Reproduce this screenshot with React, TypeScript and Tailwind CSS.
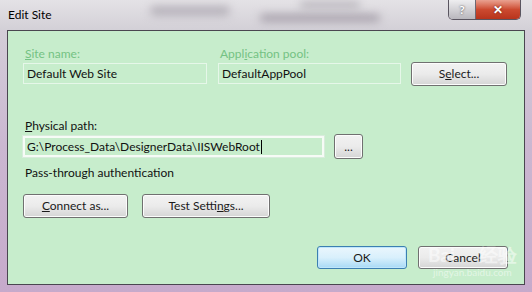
import React from "react";

const font = { fontFamily: 'Lato, "Noto Sans", "Liberation Sans", sans-serif' };

const Btn = ({
  children,
  className = "",
  primary = false,
}: {
  children: React.ReactNode;
  className?: string;
  primary?: boolean;
}) => (
  <button
    className={
      "flex items-center justify-center rounded-[3px] border text-[12px] text-[#1a1a1a] bg-gradient-to-b " +
      (primary
        ? "border-[#3c7fb1] from-[#eaf6fd] via-[#d9f0fc] to-[#a7d9f5] shadow-[inset_0_0_0_1px_#bfe6fb] "
        : "border-[#707070] from-[#f2f2f2] via-[#ebebeb] to-[#d5d5d5] shadow-[inset_0_0_0_1px_#fcfcfc] ") +
      className
    }
  >
    {children}
  </button>
);

const Field = ({ children, className = "" }: { children: React.ReactNode; className?: string }) => (
  <div
    className={
      "flex h-[21px] items-center border border-[#e6f7e9] px-[3px] text-[12px] text-[#111] " + className
    }
  >
    {children}
  </div>
);

export default function App() {
  return (
    <div
      style={font}
      className="relative h-[292px] w-[532px] overflow-hidden bg-gradient-to-b from-[#d6d3da] via-[#cbb7d1] to-[#c6aacb]"
    >
      {/* title bar */}
      <div className="relative h-[30px] bg-gradient-to-b from-[#e4e2e6] to-[#d3d0d7]">
        <div className="absolute left-[150px] top-[6px] h-[10px] w-[80px] rounded-full bg-[#b7b3bb] blur-[4px]" />
        <div className="absolute left-[260px] top-[14px] h-[8px] w-[120px] rounded-full bg-[#a9a3ad] blur-[4px]" />
        <div className="absolute left-[300px] top-[2px] h-[6px] w-[60px] rounded-full bg-[#b3afb6] blur-[4px]" />
        <span className="absolute left-[8px] top-[6px] text-[12px] text-black">Edit Site</span>
        <div className="absolute right-[11px] top-0 flex h-[20px] overflow-hidden rounded-b-[5px] border border-t-0 border-[#5a5560]">
          <div className="flex w-[27px] items-center justify-center border-r border-[#6d6872] bg-gradient-to-b from-[#eeeef0] to-[#b9b7bd] text-[12px] font-bold text-white [text-shadow:0_0_2px_#333]">
            ?
          </div>
          <div className="flex w-[44px] items-center justify-center bg-gradient-to-b from-[#e9a190] via-[#cc4a30] to-[#b8331c] text-[12px] font-bold text-white [text-shadow:0_0_2px_#5a1a10]">
            ✕
          </div>
        </div>
      </div>

      {/* content panel */}
      <div className="mx-[7px] h-[255px] border border-[#4a4650] bg-[#c7edcc] px-[15px]">
        <div className="mt-[14px] flex">
          <div className="w-[184px]">
            <div className="pl-[2px] text-[12px] leading-[17px] text-[#74c283]">
              <span className="underline">S</span>ite name:
            </div>
            <Field className="mt-[1px] w-[184px]">Default Web Site</Field>
          </div>
          <div className="ml-[11px] w-[183px]">
            <div className="pl-[2px] text-[12px] leading-[17px] text-[#74c283]">
              Appl<span className="underline">i</span>cation pool:
            </div>
            <Field className="mt-[1px] w-[183px]">DefaultAppPool</Field>
          </div>
          <Btn className="ml-[10px] mt-[17px] h-[24px] w-[96px]">
            <span>
              S<span className="underline">e</span>lect...
            </span>
          </Btn>
        </div>

        <div className="mt-[32px] pl-[2px] text-[12px] leading-[16px] text-[#111]">
          <span className="underline">P</span>hysical path:
        </div>
        <div className="flex h-[25px] items-center">
          <div className="flex h-[21px] w-[301px] items-center border-2 border-[#f6fbf6] px-[2px] text-[12px] text-[#111] shadow-[0_0_0_1px_#d8ecdc]">
            G:\Process_Data\DesignerData\IISWebRoot
            <span className="ml-[1px] h-[14px] w-px bg-black" />
          </div>
          <Btn className="ml-[10px] h-[25px] w-[29px] text-[10px]">...</Btn>
        </div>

        <div className="mt-[5px] pl-[2px] text-[12px] leading-[17px] text-[#111]">
          Pass-through authentication
        </div>

        <div className="mt-[13px] flex gap-[14px]">
          <Btn className="h-[24px] w-[105px]">
            <span>
              <span className="underline">C</span>onnect as...
            </span>
          </Btn>
          <Btn className="h-[24px] w-[128px]">
            <span>
              Test Setti<span className="underline">n</span>gs...
            </span>
          </Btn>
        </div>

        <div className="mt-[28px] flex justify-end gap-[11px] pr-[1px]">
          <Btn primary className="h-[23px] w-[90px]">
            OK
          </Btn>
          <Btn className="h-[23px] w-[90px]">Cancel</Btn>
        </div>
      </div>

      {/* watermark */}
      <div className="pointer-events-none absolute left-[428px] top-[244px] flex flex-col items-center text-white/50">
        <div className="text-[19px] font-bold leading-[22px]">
          Bai<span className="ml-[24px]">经验</span>
        </div>
        <div className="text-[10px] leading-[12px]">jingyan.baidu.com</div>
      </div>
    </div>
  );
}
